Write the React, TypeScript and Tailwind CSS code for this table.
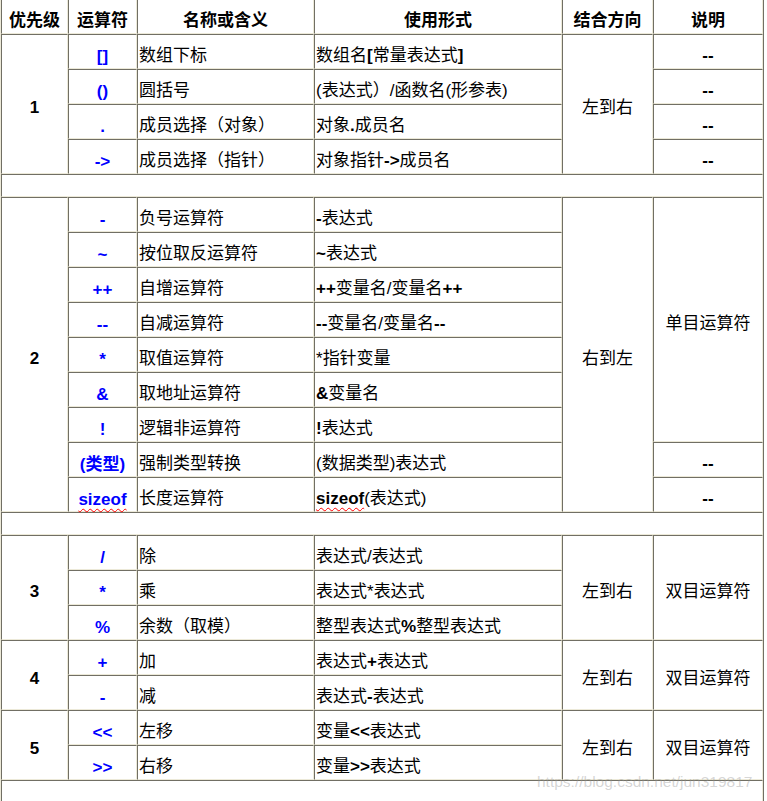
import React from "react";

type Item = { op: string; name: string; use: string };
type Note = { text: string; span: number };
type Group = { prio: string; assoc: string; items: Item[]; notes: Note[]; sepAfter: boolean };

const groups: Group[] = [
  {
    prio: "1",
    assoc: "左到右",
    items: [
      { op: "[]", name: "数组下标", use: "数组名[常量表达式]" },
      { op: "()", name: "圆括号", use: "(表达式）/函数名(形参表)" },
      { op: ".", name: "成员选择（对象）", use: "对象.成员名" },
      { op: "->", name: "成员选择（指针）", use: "对象指针->成员名" },
    ],
    notes: [
      { text: "--", span: 1 },
      { text: "--", span: 1 },
      { text: "--", span: 1 },
      { text: "--", span: 1 },
    ],
    sepAfter: true,
  },
  {
    prio: "2",
    assoc: "右到左",
    items: [
      { op: "-", name: "负号运算符", use: "-表达式" },
      { op: "~", name: "按位取反运算符", use: "~表达式" },
      { op: "++", name: "自增运算符", use: "++变量名/变量名++" },
      { op: "--", name: "自减运算符", use: "--变量名/变量名--" },
      { op: "*", name: "取值运算符", use: "*指针变量" },
      { op: "&", name: "取地址运算符", use: "&变量名" },
      { op: "!", name: "逻辑非运算符", use: "!表达式" },
      { op: "(类型)", name: "强制类型转换", use: "(数据类型)表达式" },
      { op: "sizeof", name: "长度运算符", use: "sizeof(表达式)" },
    ],
    notes: [
      { text: "单目运算符", span: 7 },
      { text: "--", span: 1 },
      { text: "--", span: 1 },
    ],
    sepAfter: true,
  },
  {
    prio: "3",
    assoc: "左到右",
    items: [
      { op: "/", name: "除", use: "表达式/表达式" },
      { op: "*", name: "乘", use: "表达式*表达式" },
      { op: "%", name: "余数（取模）", use: "整型表达式%整型表达式" },
    ],
    notes: [{ text: "双目运算符", span: 3 }],
    sepAfter: false,
  },
  {
    prio: "4",
    assoc: "左到右",
    items: [
      { op: "+", name: "加", use: "表达式+表达式" },
      { op: "-", name: "减", use: "表达式-表达式" },
    ],
    notes: [{ text: "双目运算符", span: 2 }],
    sepAfter: false,
  },
  {
    prio: "5",
    assoc: "左到右",
    items: [
      { op: "<<", name: "左移", use: "变量<<表达式" },
      { op: ">>", name: "右移", use: "变量>>表达式" },
    ],
    notes: [{ text: "双目运算符", span: 2 }],
    sepAfter: true,
  },
];

const cell =
  "border border-t-[#716f64] border-l-[#716f64] border-r-[#ece9d8] border-b-[#ece9d8] p-0";
const low = "align-bottom pb-[2px] leading-[20px]";
const mid = "align-middle pt-[8px] leading-[20px] text-center";

function renderUse(s: string): React.ReactNode[] {
  const out: React.ReactNode[] = [];
  const re = /(sizeof)|([\x21-\x7e]+)|([^\x21-\x7e]+)/g;
  let m: RegExpExecArray | null;
  let k = 0;
  while ((m = re.exec(s)) !== null) {
    if (m[1]) {
      out.push(
        <span
          key={k++}
          className="font-bold underline decoration-wavy decoration-[#ff0000] decoration-1 underline-offset-[3px]"
        >
          sizeof
        </span>
      );
    } else if (m[2]) {
      const parts = m[2].split(/([()/*])/);
      parts.forEach((p) => {
        if (!p) return;
        if (/^[()/*]$/.test(p)) out.push(<span key={k++}>{p}</span>);
        else out.push(<span key={k++} className="font-bold">{p}</span>);
      });
    } else {
      out.push(<span key={k++}>{m[3]}</span>);
    }
  }
  return out;
}

function SepRow() {
  return (
    <tr className="h-[23px]">
      <td colSpan={6} className={cell}></td>
    </tr>
  );
}

export default function App() {
  return (
    <div className="relative w-[767px] h-[801px] overflow-hidden bg-white font-['Liberation_Sans','Noto_Sans_CJK_SC',sans-serif] text-[17px] text-black">
      <table className="table-fixed border-separate border-spacing-0 w-[764px] border-l border-r border-l-[#ece9d8] border-r-[#716f64]">
        <colgroup>
          <col className="w-[67px]" />
          <col className="w-[69px]" />
          <col className="w-[177px]" />
          <col className="w-[248px]" />
          <col className="w-[91px]" />
          <col className="w-[110px]" />
        </colgroup>
        <thead>
          <tr className="h-[34px]">
            {["优先级", "运算符", "名称或含义", "使用形式", "结合方向", "说明"].map((h) => (
              <th
                key={h}
                className={`${cell} border-t-0 ${low} text-center font-bold whitespace-nowrap`}
              >
                {h}
              </th>
            ))}
          </tr>
        </thead>
        <tbody>
          {groups.map((g, gi) => {
            const noteStarts: Record<number, Note> = {};
            let idx = 0;
            g.notes.forEach((n) => {
              noteStarts[idx] = n;
              idx += n.span;
            });
            return (
              <React.Fragment key={gi}>
                {g.items.map((it, i) => (
                  <tr key={i} className="h-[35px]">
                    {i === 0 && (
                      <td rowSpan={g.items.length} className={`${cell} ${mid} font-bold text-[17px]`}>
                        {g.prio}
                      </td>
                    )}
                    <td
                      className={`${cell} align-bottom pb-[1px] leading-[20px] text-center font-bold text-[#0000ff] whitespace-nowrap`}
                    >
                      {it.op === "sizeof" ? (
                        <span className="underline decoration-wavy decoration-[#ff0000] decoration-1 underline-offset-[3px]">
                          sizeof
                        </span>
                      ) : (
                        it.op
                      )}
                    </td>
                    <td className={`${cell} ${low} pl-[1px] whitespace-nowrap`}>{it.name}</td>
                    <td className={`${cell} ${low} pl-[1px] whitespace-nowrap`}>{renderUse(it.use)}</td>
                    {i === 0 && (
                      <td rowSpan={g.items.length} className={`${cell} ${mid}`}>
                        {g.assoc}
                      </td>
                    )}
                    {noteStarts[i] &&
                      (noteStarts[i].text === "--" ? (
                        <td className={`${cell} ${low} text-center font-bold`}>--</td>
                      ) : (
                        <td rowSpan={noteStarts[i].span} className={`${cell} ${mid}`}>
                          {noteStarts[i].text}
                        </td>
                      ))}
                  </tr>
                ))}
                {g.sepAfter && <SepRow />}
              </React.Fragment>
            );
          })}
        </tbody>
      </table>
      <div className="absolute left-[537px] top-[772px] text-[15.5px] leading-[20px] text-[rgba(150,150,150,0.4)] font-['Liberation_Sans',sans-serif] whitespace-nowrap pointer-events-none">
        https://blog.csdn.net/jun319817
      </div>
    </div>
  );
}
